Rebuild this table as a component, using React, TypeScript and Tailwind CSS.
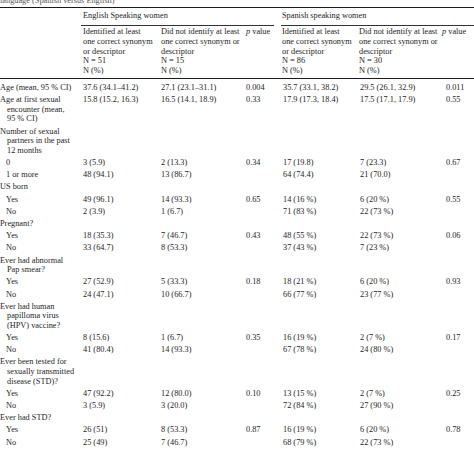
import React from "react";

type Row = { label: string[]; sub?: boolean; v?: string[] };

const rows: Row[] = [
  { label: ["Age (mean, 95 % CI)"], v: ["37.6 (34.1–41.2)", "27.1 (23.1–31.1)", "0.004", "35.7 (33.1, 38.2)", "29.5 (26.1, 32.9)", "0.011"] },
  { label: ["Age at first sexual", "encounter (mean,", "95 % CI)"], v: ["15.8 (15.2, 16.3)", "16.5 (14.1, 18.9)", "0.33", "17.9 (17.3, 18.4)", "17.5 (17.1, 17.9)", "0.55"] },
  { label: ["Number of sexual", "partners in the past", "12 months"] },
  { label: ["0"], sub: true, v: ["3 (5.9)", "2 (13.3)", "0.34", "17 (19.8)", "7 (23.3)", "0.67"] },
  { label: ["1 or more"], sub: true, v: ["48 (94.1)", "13 (86.7)", "", "64 (74.4)", "21 (70.0)", ""] },
  { label: ["US born"] },
  { label: ["Yes"], sub: true, v: ["49 (96.1)", "14 (93.3)", "0.65", "14 (16 %)", "6 (20 %)", "0.55"] },
  { label: ["No"], sub: true, v: ["2 (3.9)", "1 (6.7)", "", "71 (83 %)", "22 (73 %)", ""] },
  { label: ["Pregnant?"] },
  { label: ["Yes"], sub: true, v: ["18 (35.3)", "7 (46.7)", "0.43", "48 (55 %)", "22 (73 %)", "0.06"] },
  { label: ["No"], sub: true, v: ["33 (64.7)", "8 (53.3)", "", "37 (43 %)", "7 (23 %)", ""] },
  { label: ["Ever had abnormal", "Pap smear?"] },
  { label: ["Yes"], sub: true, v: ["27 (52.9)", "5 (33.3)", "0.18", "18 (21 %)", "6 (20 %)", "0.93"] },
  { label: ["No"], sub: true, v: ["24 (47.1)", "10 (66.7)", "", "66 (77 %)", "23 (77 %)", ""] },
  { label: ["Ever had human", "papilloma virus", "(HPV) vaccine?"] },
  { label: ["Yes"], sub: true, v: ["8 (15.6)", "1 (6.7)", "0.35", "16 (19 %)", "2 (7 %)", "0.17"] },
  { label: ["No"], sub: true, v: ["41 (80.4)", "14 (93.3)", "", "67 (78 %)", "24 (80 %)", ""] },
  { label: ["Ever been tested for", "sexually transmitted", "disease (STD)?"] },
  { label: ["Yes"], sub: true, v: ["47 (92.2)", "12 (80.0)", "0.10", "13 (15 %)", "2 (7 %)", "0.25"] },
  { label: ["No"], sub: true, v: ["3 (5.9)", "3 (20.0)", "", "72 (84 %)", "27 (90 %)", ""] },
  { label: ["Ever had STD?"] },
  { label: ["Yes"], sub: true, v: ["26 (51)", "8 (53.3)", "0.87", "16 (19 %)", "6 (20 %)", "0.78"] },
  { label: ["No"], sub: true, v: ["25 (49)", "7 (46.7)", "", "68 (79 %)", "22 (73 %)", ""] },
];

const grid = "grid grid-cols-[83px_78px_85px_37px_77px_84px_30px]";

function HeadCell({ lines }: { lines: string[] }) {
  return (
    <div className="flex flex-col">
      {lines.map((l, i) => (
        <span key={i} className="whitespace-nowrap">{l}</span>
      ))}
    </div>
  );
}

export default function App() {
  return (
    <div
      className="w-[474px] h-[451px] overflow-hidden bg-white text-[#1e1e1e] text-[8.3px] leading-[9.6px]"
      style={{ fontFamily: '"Liberation Serif", "Times New Roman", serif' }}
    >
      <div className="h-[7px] overflow-hidden">
        <div className="-mt-[4px] whitespace-nowrap text-[#555]">language (Spanish versus English)</div>
      </div>
      <div className="h-[1.3px] bg-[#1a1a1a]" />
      <div className={grid}>
        <div />
        <div className="col-span-3 pt-[2.4px]">
          <div className="h-[14.6px] whitespace-nowrap">English Speaking women</div>
          <div className="h-px bg-[#333] -ml-[2px] mr-[9px]" />
        </div>
        <div className="col-span-3 pt-[2.4px]">
          <div className="h-[14.6px] whitespace-nowrap -ml-[1px]">Spanish speaking women</div>
          <div className="h-px bg-[#333] -ml-[2px]" />
        </div>
      </div>
      <div className={`${grid} pt-[1.2px] pb-[2.2px]`}>
        <div />
        <HeadCell lines={["Identified at least", "one correct synonym", "or descriptor", "N = 51", "N (%)"]} />
        <HeadCell lines={["Did not identify at least", "one correct synonym or", "descriptor", "N = 15", "N (%)"]} />
        <div className="whitespace-nowrap"><i>p</i> value</div>
        <div className="-ml-[1px]">
          <HeadCell lines={["Identified at least", "one correct synonym", "or descriptor", "N = 86", "N (%)"]} />
        </div>
        <div className="-ml-[1px]">
          <HeadCell lines={["Did not identify at least", "one correct synonym or", "descriptor", "N = 30", "N (%)"]} />
        </div>
        <div className="whitespace-nowrap -ml-[2px]"><i>p</i> value</div>
      </div>
      <div className="h-px bg-[#1a1a1a]" />
      <div className="pt-[3.2px]">
        {rows.map((r, i) => (
          <div key={i} className={`${grid} py-[1.3px]`}>
            <div className={r.sub ? "pl-[6px]" : ""}>
              {r.label.map((l, j) => (
                <div key={j} className={`whitespace-nowrap ${j > 0 ? "pl-[7px]" : ""}`}>{l}</div>
              ))}
            </div>
            {(r.v ?? ["", "", "", "", "", ""]).map((v, k) => (
              <div key={k} className={`whitespace-nowrap ${k === 5 ? "pl-[2px]" : ""}`}>{v}</div>
            ))}
          </div>
        ))}
      </div>
    </div>
  );
}
